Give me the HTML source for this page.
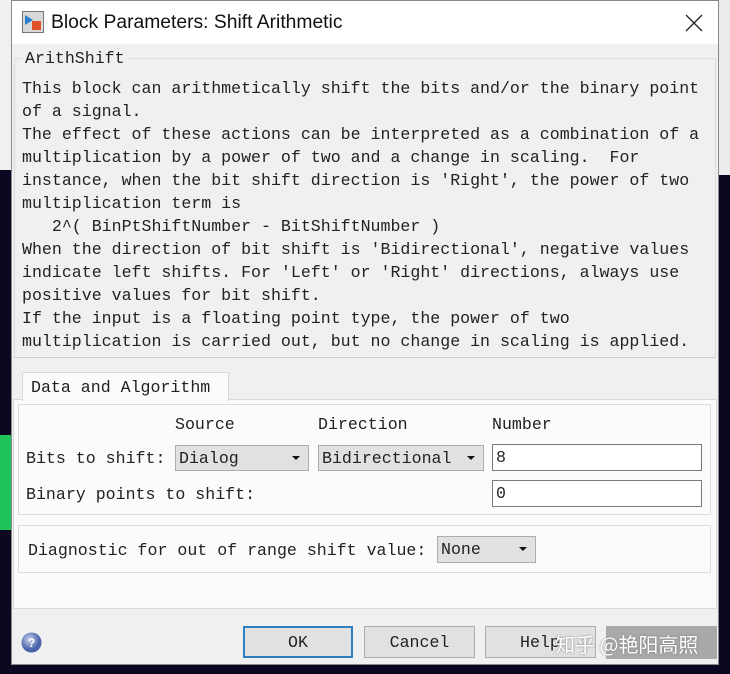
<!DOCTYPE html>
<html><head><style>
*{margin:0;padding:0;box-sizing:border-box}
body{width:730px;height:674px;background:#0c0620;position:relative;overflow:hidden;font-family:"Liberation Mono","Noto Serif CJK SC",monospace;color:#222}
.a{position:absolute}
.m{font-size:16.6px;white-space:pre;line-height:23px}
.dd{position:absolute;background:#e1e1e1;border:1px solid #adadad;font-size:16.6px;line-height:26px;padding-left:3px}
.dd:after{content:"";position:absolute;right:8px;top:10px;border-left:4px solid transparent;border-right:4px solid transparent;border-top:4px solid #111}
.tb{position:absolute;background:#fff;border:1px solid #7a7a7a;font-size:16.6px;line-height:26px;padding-left:3px}
.btn{position:absolute;top:626px;height:32px;background:#e1e1e1;border:1px solid #adadad;text-align:center;font-size:16.6px;line-height:32px}
</style></head><body>
<div class="a" style="left:0;top:0;width:12px;height:170px;background:#f0f0f0"></div>
<div class="a" style="left:0;top:435px;width:12px;height:95px;background:#1fc45a"></div>
<div class="a" style="left:718px;top:0;width:12px;height:175px;background:#ececec"></div>
<div class="a" style="left:11px;top:0;width:708px;height:665px;background:#f0f0f0;border:1px solid #888"></div>
<div class="a" style="left:12px;top:1px;width:706px;height:43px;background:#fff"></div>
<svg class="a" style="left:22px;top:11px" width="22" height="22" viewBox="0 0 22 22"><rect x="0.5" y="0.5" width="21" height="21" fill="#d8d8d8" stroke="#777"/><path d="M3 4 L11 9 L3 14Z" fill="#2a7fd0"/><rect x="10" y="10" width="9" height="9" fill="#e2502a"/></svg>
<div class="a" style="left:51px;top:12px;font-family:'Liberation Sans',sans-serif;font-size:19.3px;color:#111">Block Parameters: Shift Arithmetic</div>
<svg class="a" style="left:685px;top:14px" width="18" height="18"><path d="M1 1L17 17M17 1L1 17" stroke="#222" stroke-width="1.3"/></svg>
<div class="a" style="left:14px;top:58px;width:702px;height:300px;border:1px solid #dcdcdc;border-bottom-color:#cfcfcf"></div>
<div class="a m" style="left:22px;top:47px;background:#f0f0f0;padding:0 4px 0 3px">ArithShift</div>
<div class="a m" style="left:22px;top:77px">This block can arithmetically shift the bits and/or the binary point
of a signal.
The effect of these actions can be interpreted as a combination of a
multiplication by a power of two and a change in scaling.  For
instance, when the bit shift direction is 'Right', the power of two
multiplication term is
   2^( BinPtShiftNumber - BitShiftNumber )
When the direction of bit shift is 'Bidirectional', negative values
indicate left shifts. For 'Left' or 'Right' directions, always use
positive values for bit shift.
If the input is a floating point type, the power of two
multiplication is carried out, but no change in scaling is applied.</div>
<div class="a" style="left:13px;top:399px;width:704px;height:210px;background:#fbfbfb;border:1px solid #d9d9d9"></div>
<div class="a" style="left:22px;top:372px;width:207px;height:29px;background:#fbfbfb;border:1px solid #d9d9d9;border-bottom:none"></div>
<div class="a m" style="left:31px;top:376px">Data and Algorithm</div>
<div class="a" style="left:18px;top:404px;width:693px;height:111px;border:1px solid #dcdcdc"></div>
<div class="a" style="left:18px;top:525px;width:693px;height:48px;border:1px solid #dcdcdc"></div>
<div class="a m" style="left:175px;top:413px">Source</div>
<div class="a m" style="left:318px;top:413px">Direction</div>
<div class="a m" style="left:492px;top:413px">Number</div>
<div class="a m" style="left:26px;top:447px">Bits to shift:</div>
<div class="dd" style="left:175px;top:445px;width:134px;height:26px">Dialog</div>
<div class="dd" style="left:318px;top:445px;width:166px;height:26px">Bidirectional</div>
<div class="tb" style="left:492px;top:444px;width:210px;height:27px">8</div>
<div class="a m" style="left:26px;top:483px">Binary points to shift:</div>
<div class="tb" style="left:492px;top:480px;width:210px;height:27px">0</div>
<div class="a m" style="left:28px;top:539px">Diagnostic for out of range shift value:</div>
<div class="dd" style="left:437px;top:536px;width:99px;height:27px">None</div>
<svg class="a" style="left:21px;top:632px" width="21" height="21"><defs><radialGradient id="g" cx="40%" cy="35%"><stop offset="0" stop-color="#c9d6f2"/><stop offset="1" stop-color="#4a62a8"/></radialGradient></defs><circle cx="10.5" cy="10.5" r="10" fill="url(#g)"/><text x="10.5" y="15" font-size="12" text-anchor="middle" fill="#fff" font-family="Liberation Sans" font-weight="bold">?</text></svg>
<div class="btn" style="left:243px;width:110px;border:2px solid #2f7ec0;line-height:30px">OK</div>
<div class="btn" style="left:364px;width:111px">Cancel</div>
<div class="btn" style="left:485px;width:111px;text-align:left;padding-left:34px">Help</div>
<div class="a" style="left:606px;top:626px;width:111px;height:33px;background:#a9a9a9"></div>
<div class="a" style="left:555px;top:629px;font-family:'Noto Sans CJK SC',sans-serif;font-size:20px;color:#fff;white-space:nowrap;text-shadow:0 0 2px #777">知乎 @艳阳高照</div>
</body></html>
